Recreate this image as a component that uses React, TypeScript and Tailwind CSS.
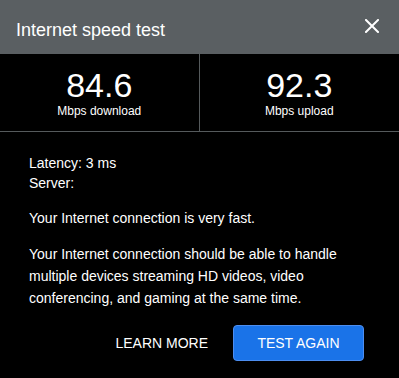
export default function App() {
  const stats = [
    { value: '84.6', label: 'Mbps download' },
    { value: '92.3', label: 'Mbps upload' },
  ];

  return (
    <div
      className="w-[399px] h-[378px] bg-black text-white overflow-hidden"
      style={{ fontFamily: '"Liberation Sans", Arial, sans-serif' }}
    >
      {/* Header */}
      <div className="h-[54px] bg-[#5a5f62] flex justify-between pl-4 pr-5">
        <div className="pt-[18px] text-[18px] leading-[24px]">Internet speed test</div>
        <button className="mt-[19px] w-[14px] h-[14px] flex">
          <svg width="14" height="14" viewBox="0 0 14 14">
            <path d="M1 1 L13 13 M13 1 L1 13" stroke="#fff" strokeWidth="2" strokeLinecap="square" />
          </svg>
        </button>
      </div>

      {/* Stats */}
      <div className="grid grid-cols-2 border-b border-[#555a5c]">
        {stats.map((s, i) => (
          <div
            key={s.label}
            className={
              'flex flex-col items-center pt-[14px] pb-[13px] ' + (i === 0 ? 'border-r border-[#555a5c]' : '')
            }
          >
            <div className="text-[34px] leading-[35px]">{s.value}</div>
            <div className="text-[12px] leading-[14px] mt-[1px]">{s.label}</div>
          </div>
        ))}
      </div>

      {/* Body */}
      <div className="pl-[29px] pr-[35px] pt-[21px] text-[14px]">
        <div className="leading-[20px]">
          <div>Latency: 3 ms</div>
          <div>Server:</div>
        </div>
        <p className="mt-[15px] leading-[20px]">Your Internet connection is very fast.</p>
        <p className="mt-[15px] leading-[22px] pr-4">
          Your Internet connection should be able to handle multiple devices streaming HD videos, video
          conferencing, and gaming at the same time.
        </p>
        <div className="mt-4 flex justify-end items-center gap-[17px]">
          <button className="h-9 px-2 text-[14px] text-white">LEARN MORE</button>
          <button className="h-9 w-[131px] rounded-[4px] bg-[#1a73e8] border border-[#4d8ef0] text-[14px] text-white">
            TEST AGAIN
          </button>
        </div>
      </div>
    </div>
  );
}
